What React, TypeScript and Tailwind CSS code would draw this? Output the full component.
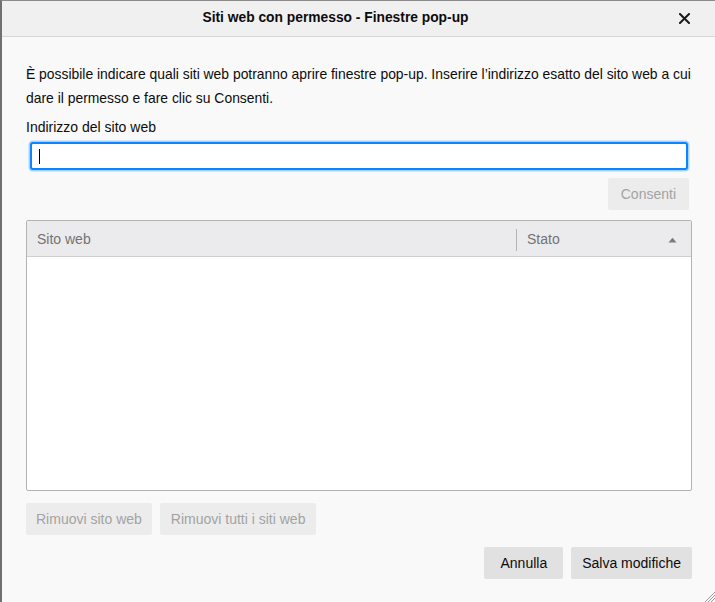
import React from "react";

export default function App() {
  const font = { fontFamily: '"Liberation Sans", Arial, sans-serif' };
  return (
    <div
      className="w-[715px] h-[602px] flex flex-col bg-[#f9f9f9] border-l-2 border-t border-l-[#707070] border-t-[#8c8c8c] overflow-hidden relative"
      style={font}
    >
      {/* Header */}
      <div className="h-[36px] shrink-0 flex items-center justify-center relative bg-[#f0f0f0] border-b border-[#d6d6d6] pr-[46px]">
        <span className="text-[13.8px] font-bold text-[#0c0c0d]">Siti web con permesso - Finestre pop-up</span>
        <button className="absolute right-[25px] top-[12px] w-[11px] h-[11px]">
          <svg viewBox="0 0 11 11" width="11" height="11">
            <path d="M1 1 L10 10 M10 1 L1 10" stroke="#1a1a1a" strokeWidth="2" strokeLinecap="square" />
          </svg>
        </button>
      </div>

      {/* Body */}
      <div className="flex-1 flex flex-col pl-[24px] pr-[23px]">
        <p className="mt-[25px] text-[13.9px] leading-[24px] text-[#0c0c0d] whitespace-nowrap">
          È possibile indicare quali siti web potranno aprire finestre pop-up. Inserire l’indirizzo esatto del sito web a cui
          <br />
          dare il permesso e fare clic su Consenti.
        </p>
        <label className="mt-[7px] text-[14px] leading-[20px] text-[#0c0c0d]">Indirizzo del sito web</label>
        <div className="mt-[5px] mx-[4px] h-[28px] rounded-[3px] border-2 border-[#0a84ff] bg-white shadow-[0_0_0_1.5px_#a9d3ff] flex items-center pl-[7px]">
          <div className="w-px h-[15px] bg-black" />
        </div>
        <div className="mt-[8px] flex justify-end pr-[3px]">
          <button className="h-[32px] px-[13px] rounded-[2px] bg-[#ececec] text-[14px] text-[#a3a3a3]">Consenti</button>
        </div>
        <div className="mt-[10px] h-[271px] border border-[#b3b3b3] rounded-[2px] bg-white flex flex-col">
          <div className="h-[36px] shrink-0 flex items-center pt-[2px] bg-[#ebebed] border-b border-[#cfcfd2] text-[14px] text-[#737373]">
            <div className="w-[490px] pl-[10px] border-r border-[#b5b5b5] h-[22px] flex items-center">Sito web</div>
            <div className="flex-1 pl-[10px] pr-[14px] flex items-center justify-between">
              <span>Stato</span>
              <svg width="9" height="6" viewBox="0 0 9 6">
                <path d="M0.5 5.5 L4.5 0.8 L8.5 5.5 Z" fill="#7a7a7a" />
              </svg>
            </div>
          </div>
        </div>
        <div className="mt-[12px] flex gap-[8px]">
          <button className="h-[32px] px-[10px] rounded-[2px] bg-[#ececec] text-[14px] text-[#a3a3a3]">Rimuovi sito web</button>
          <button className="h-[32px] px-[11px] rounded-[2px] bg-[#ececec] text-[14px] text-[#a3a3a3]">Rimuovi tutti i siti web</button>
        </div>
        <div className="mt-[12px] flex justify-end gap-[8px]">
          <button className="h-[32px] px-[16px] rounded-[2px] bg-[#e1e1e1] text-[14px] text-[#0c0c0d]">Annulla</button>
          <button className="h-[32px] px-[11px] rounded-[2px] bg-[#e1e1e1] text-[14px] text-[#0c0c0d]">Salva modifiche</button>
        </div>
      </div>

      {/* Resize grip */}
      <svg className="absolute right-0 bottom-0" width="12" height="12" viewBox="0 0 12 12">
        <path d="M12 2 L2 12 M12 5 L5 12 M12 8 L8 12" stroke="#9a9a9a" strokeWidth="1" />
      </svg>
    </div>
  );
}
